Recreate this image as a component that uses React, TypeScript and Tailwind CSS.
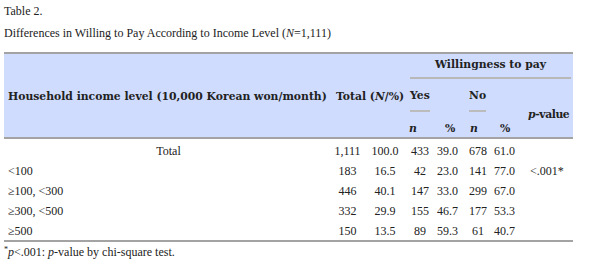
const ROWS = [
  { label: "<100", n: "183", pct: "16.5", yn: "42", yp: "23.0", nn: "141", np: "77.0", p: "<.001*" },
  { label: "≥100, <300", n: "446", pct: "40.1", yn: "147", yp: "33.0", nn: "299", np: "67.0", p: "" },
  { label: "≥300, <500", n: "332", pct: "29.9", yn: "155", yp: "46.7", nn: "177", np: "53.3", p: "" },
  { label: "≥500", n: "150", pct: "13.5", yn: "89", yp: "59.3", nn: "61", np: "40.7", p: "" },
];

export default function App() {
  return (
    <div className="w-[600px] h-[276px] bg-white text-[#222] font-['Liberation_Serif',serif] text-[12px] leading-[14px] px-[4px] pt-[4px]">
      <p>Table 2.</p>
      <p className="mt-[8px]">
        Differences in Willing to Pay According to Income Level (<i>N</i>=1,111)
      </p>
      <table className="mt-[12px] w-[569px] table-fixed border-collapse border-t-2 border-b-2 border-[#a3a3a3]">
        <colgroup>
          <col className="w-[329px]" />
          <col className="w-[29px]" />
          <col className="w-[46px]" />
          <col className="w-[24px]" />
          <col className="w-[31px]" />
          <col className="w-[30px]" />
          <col className="w-[23px]" />
          <col className="w-[57px]" />
        </colgroup>
        <thead className="bg-[#cfdcfe] border-b-2 border-[#a3a3a3] font-bold font-['DejaVu_Serif',serif] text-[10.8px]">
          <tr>
            <th rowSpan={3} className="text-left pl-[4px] pt-[3px] align-middle whitespace-nowrap">
              Household income level (10,000 Korean won/month)
            </th>
            <th colSpan={2} rowSpan={3} className="text-left pl-[3px] pt-[3px] align-middle whitespace-nowrap">
              Total (<i>N</i>/%)
            </th>
            <th colSpan={5} className="pt-[4px] px-[2px] align-top">
              <div className="pb-[5px] border-b-2 border-[#b8b8b8] text-center">Willingness to pay</div>
            </th>
          </tr>
          <tr>
            <th colSpan={2} className="text-left pl-[2px] pt-[10px] align-top">
              <span className="inline-block pb-[7px] border-b-2 border-[#bcbcbc]">Yes</span>
            </th>
            <th colSpan={2} className="text-left pl-[6px] pt-[10px] align-top">
              <span className="inline-block pb-[7px] border-b-2 border-[#bcbcbc]">No</span>
            </th>
            <th rowSpan={2} className="text-left pl-[12px] align-bottom pb-[15px] whitespace-nowrap tracking-[-0.4px]">
              <i>p</i>-value
            </th>
          </tr>
          <tr>
            <th className="text-left pl-[1px] pt-[10px] pb-[1px]"><i>n</i></th>
            <th className="text-left pl-[13px] pt-[10px] pb-[1px]">%</th>
            <th className="text-left pl-[7px] pt-[10px] pb-[1px]"><i>n</i></th>
            <th className="text-left pl-[7px] pt-[10px] pb-[1px]">%</th>
          </tr>
        </thead>
        <tbody>
          <tr className="h-[23px]">
            <td className="text-center pt-[1px]">Total</td>
            <td className="text-center pt-[1px]">1,111</td>
            <td className="text-center pt-[1px]">100.0</td>
            <td className="text-center pt-[1px]">433</td>
            <td className="text-center pt-[1px]">39.0</td>
            <td className="text-center pt-[1px]">678</td>
            <td className="text-center pt-[1px]">61.0</td>
            <td />
          </tr>
          {ROWS.map((r) => (
            <tr key={r.label} className="h-[20px]">
              <td className="pl-[4px]">{r.label}</td>
              <td className="text-center">{r.n}</td>
              <td className="text-center">{r.pct}</td>
              <td className="text-center">{r.yn}</td>
              <td className="text-center">{r.yp}</td>
              <td className="text-center">{r.nn}</td>
              <td className="text-center">{r.np}</td>
              <td className="pl-[14px] whitespace-nowrap">{r.p}</td>
            </tr>
          ))}
        </tbody>
      </table>
      <p className="mt-[3px]">
        <sup className="text-[8px]">*</sup>
        <i>p</i>&lt;.001: <i>p</i>-value by chi-square test.
      </p>
    </div>
  );
}
